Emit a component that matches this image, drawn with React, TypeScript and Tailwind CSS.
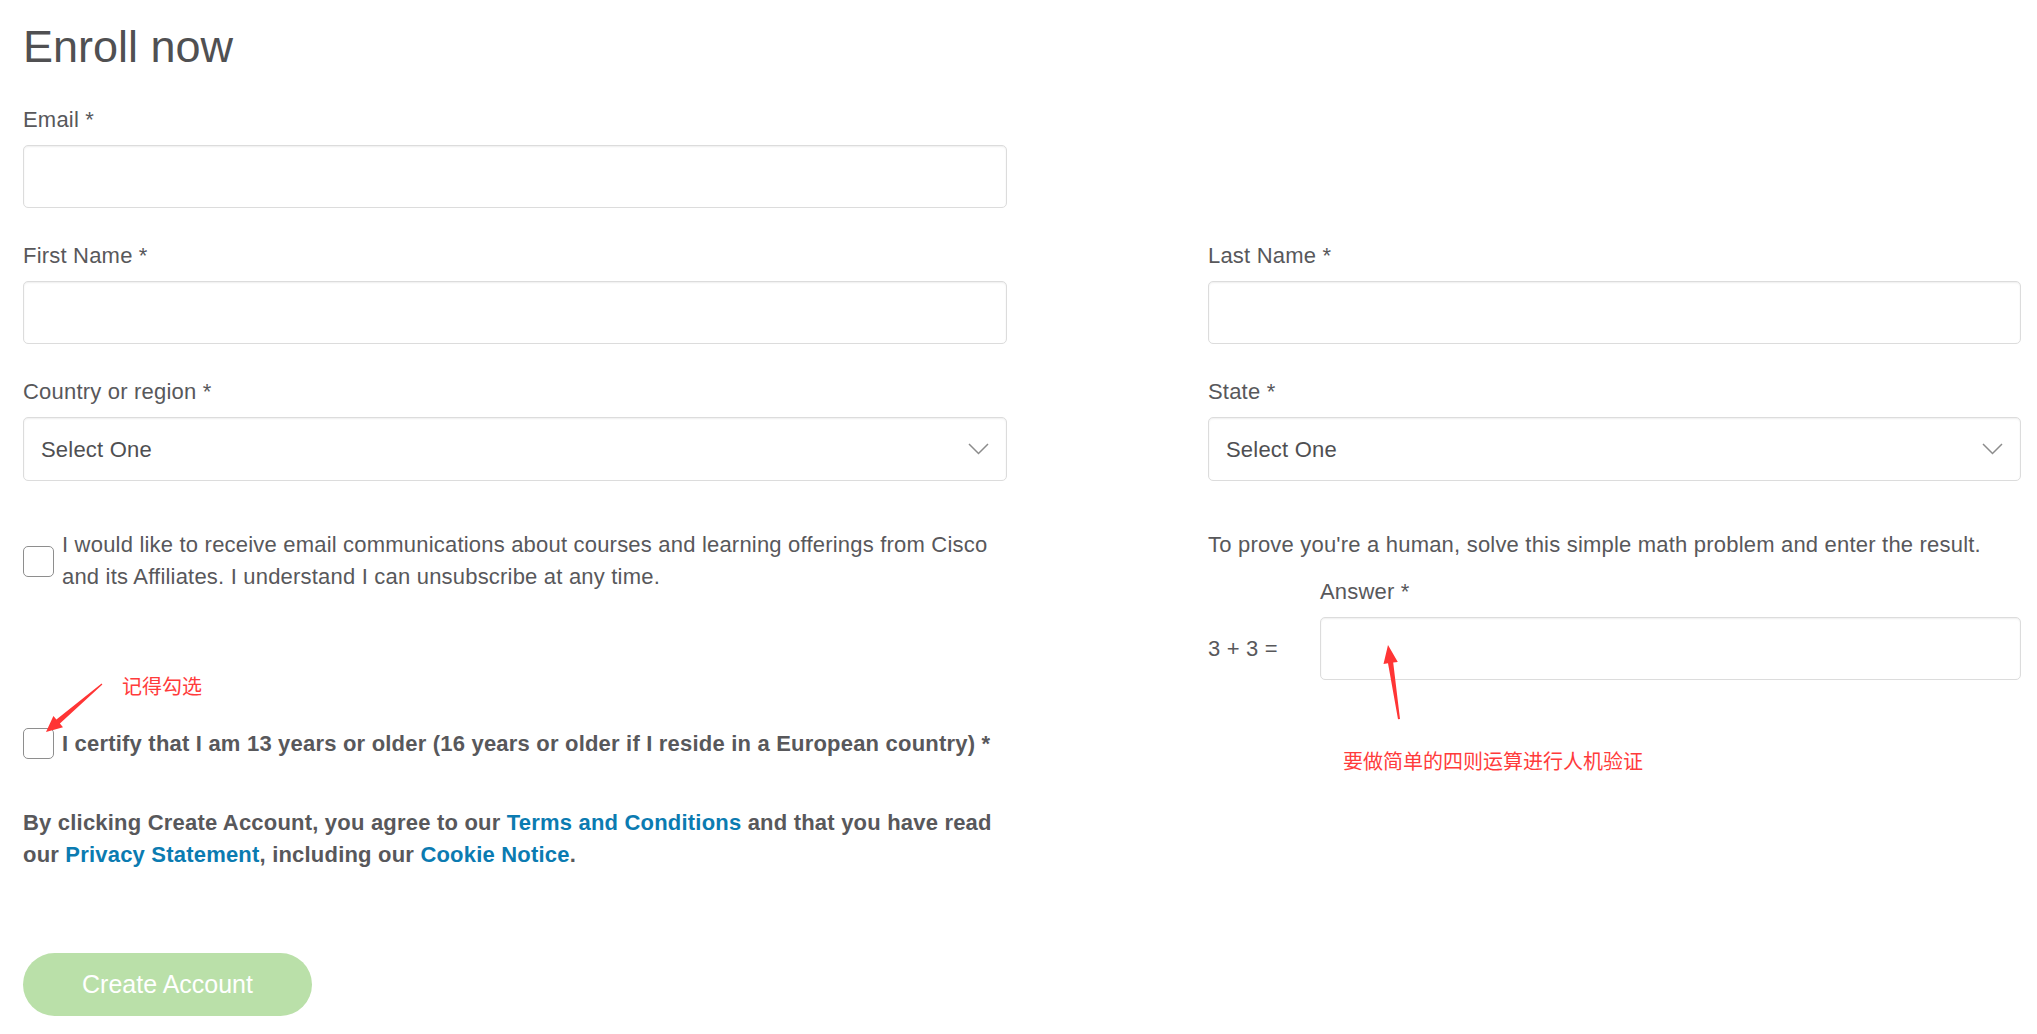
import React from 'react';

const font = { fontFamily: '"Liberation Sans", Arial, "Noto Sans CJK SC", sans-serif' };

const Label: React.FC<{ children: React.ReactNode }> = ({ children }) => (
  <label className="block text-[22px] leading-[31px] tracking-[0.2px] text-[#58585b] mb-[10px]">{children}</label>
);

const TextInput: React.FC = () => (
  <input
    type="text"
    className="block h-[63px] w-full rounded-[5px] border border-[#dcdcdc] bg-white shadow-[inset_0_1px_2px_rgba(0,0,0,0.07)] outline-none"
  />
);

const SelectBox: React.FC = () => (
  <div className="flex h-[64px] w-full items-center justify-between rounded-[5px] border border-[#dcdcdc] bg-white pl-[17px] pr-[17px] shadow-[inset_0_1px_2px_rgba(0,0,0,0.07)]">
    <span className="text-[22px] tracking-[0.2px] text-[#4f4f52]">Select One</span>
    <svg width="21" height="12" viewBox="0 0 21 12" fill="none">
      <path d="M1 1 L10.5 10.5 L20 1" stroke="#8c8c8c" strokeWidth="1.5" />
    </svg>
  </div>
);

const Checkbox: React.FC = () => (
  <span className="block h-[31px] w-[31px] shrink-0 rounded-[5px] border-[1.5px] border-[#8e8e8e] bg-white" />
);

export default function App() {
  return (
    <div className="min-h-screen w-full bg-white" style={font}>
      <div className="pl-[23px] pr-[16px] pt-[24px] pb-[18px]">
        <h1 className="text-[45px] leading-[45px] font-normal text-[#505052]">Enroll now</h1>

        <div className="mt-[35px] flex gap-[201px]">
          {/* left column */}
          <div className="w-[984px] shrink-0">
            <Label>Email *</Label>
            <TextInput />

            <div className="mt-[32px]">
              <Label>First Name *</Label>
              <TextInput />
            </div>

            <div className="mt-[32px]">
              <Label>Country or region *</Label>
              <SelectBox />
            </div>

            <div className="mt-[48px] flex items-center gap-[8px]">
              <Checkbox />
              <p className="text-[22px] leading-[32px] tracking-[0.2px] text-[#58585b]">
                I would like to receive email communications about courses and learning offerings from Cisco and its
                Affiliates. I understand I can unsubscribe at any time.
              </p>
            </div>

            {/* annotation: remember to tick */}
            <div className="relative mt-[80px] pl-[99px]">
              <span className="block text-[20px] leading-[28px] text-[#ff3b3b]">记得勾选</span>
              <svg className="pointer-events-none absolute left-[23px] top-[10px]" width="58" height="51" viewBox="0 0 58 51">
                <polygon points="56.4,1.5 13.9,40.6 17,44.2 0,49 7.4,33 10.4,36.6 55.6,0.5" fill="#ff3535" />
              </svg>
            </div>

            <div className="mt-[27px] flex items-center gap-[8px]">
              <Checkbox />
              <p className="text-[22px] leading-[31px] tracking-[0.2px] font-bold text-[#58585b]">
                I certify that I am 13 years or older (16 years or older if I reside in a European country) *
              </p>
            </div>

            <p className="mt-[48px] text-[22px] leading-[32px] tracking-[0.2px] font-bold text-[#58585b]">
              By clicking Create Account, you agree to our{' '}
              <a className="text-[#0b7bb1]">Terms and Conditions</a> and that you have read our{' '}
              <a className="text-[#0b7bb1]">Privacy Statement</a>, including our{' '}
              <a className="text-[#0b7bb1]">Cookie Notice</a>.
            </p>

            <button className="mt-[82px] flex h-[63px] w-[289px] items-center justify-center rounded-full bg-[#bae0a9] text-[25px] text-white">
              Create Account
            </button>
          </div>

          {/* right column */}
          <div className="w-[813px] shrink-0">
            <div className="mt-[136px]">
              <Label>Last Name *</Label>
              <TextInput />
            </div>

            <div className="mt-[32px]">
              <Label>State *</Label>
              <SelectBox />
            </div>

            <p className="mt-[48px] text-[22px] leading-[31px] tracking-[0.2px] text-[#58585b]">
              To prove you're a human, solve this simple math problem and enter the result.
            </p>

            <div className="mt-[16px] flex items-end">
              <div className="flex h-[63px] w-[112px] shrink-0 items-center text-[22px] tracking-[0.2px] text-[#58585b]">
                3 + 3 =
              </div>
              <div className="relative flex-1">
                <Label>Answer *</Label>
                <TextInput />
                <svg className="pointer-events-none absolute left-[63px] top-[68px]" width="18" height="76" viewBox="0 0 18 76">
                  <polygon points="17,75 10.2,18.4 14.8,18 5,1 0.5,20 5,19.2 15,75.2" fill="#ff3535" />
                </svg>
              </div>
            </div>

            {/* annotation: simple arithmetic check */}
            <span className="mt-[68px] block pl-[135px] text-[20px] leading-[28px] text-[#ff3b3b]">
              要做简单的四则运算进行人机验证
            </span>
          </div>
        </div>
      </div>
    </div>
  );
}
